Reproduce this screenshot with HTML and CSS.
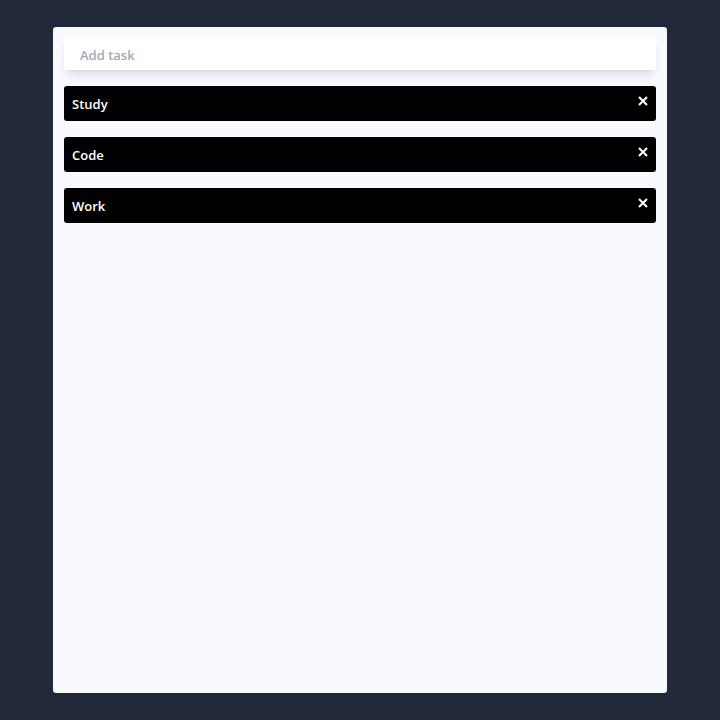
FILE: index.html
```html
<!DOCTYPE html>
<html lang="en">
<head>
  <meta charset="utf-8">
  <meta name="viewport" content="width=device-width, initial-scale=1">
  <title>Tasks</title>
  <link rel="stylesheet" href="styles.css">
</head>
<body>
  <main class="board">
    <form class="add-form">
      <input class="add-input" type="text" placeholder="Add task" aria-label="Add task">
    </form>
    <ul class="tasks">
      <li class="task">
        <span class="task-name">Study</span>
        <button class="task-remove" type="button" aria-label="Remove Study"><svg class="icon" viewBox="0 0 10 10"><path d="M1 1 9 9M9 1 1 9"/></svg></button>
      </li>
      <li class="task">
        <span class="task-name">Code</span>
        <button class="task-remove" type="button" aria-label="Remove Code"><svg class="icon" viewBox="0 0 10 10"><path d="M1 1 9 9M9 1 1 9"/></svg></button>
      </li>
      <li class="task">
        <span class="task-name">Work</span>
        <button class="task-remove" type="button" aria-label="Remove Work"><svg class="icon" viewBox="0 0 10 10"><path d="M1 1 9 9M9 1 1 9"/></svg></button>
      </li>
    </ul>
  </main>
</body>
</html>
```
FILE: styles.css
```css
* {
  box-sizing: border-box;
}

body {
  display: flex;
  min-height: 100vh;
  margin: 0;
  padding: 27px 53px;
  background: #20283a;
  font: 600 13px/19px "Open Sans", "Noto Sans", sans-serif;
}

.board {
  flex: 1;
  padding: 10px 11px;
  border-radius: 3px;
  background: #f8faff;
}

.add-form {
  margin-bottom: 16px;
}

.add-input {
  display: block;
  width: 100%;
  padding: 9px 16px 5px;
  border: 0;
  border-radius: 3px;
  outline: 0;
  background: #fff;
  box-shadow: 0 8px 12px -3px rgb(0 0 0 / 10%), 0 3px 5px -2px rgb(0 0 0 / 8%);
  color: #20283a;
  font: inherit;
}

.add-input::placeholder {
  color: #a4a8b4;
  opacity: 1;
}

.tasks {
  display: grid;
  gap: 16px;
  margin: 0;
  padding: 0;
  list-style: none;
}

.task {
  display: flex;
  align-items: flex-start;
  justify-content: space-between;
  padding: 9px 8px 7px;
  border-radius: 3px;
  background: #000;
  color: #fff;
}

.task-remove {
  display: flex;
  margin: 0;
  padding: 1px 0;
  border: 0;
  background: none;
  color: inherit;
  cursor: pointer;
}

.icon {
  width: 10px;
  height: 10px;
  fill: none;
  stroke: currentColor;
  stroke-width: 2;
}
```
